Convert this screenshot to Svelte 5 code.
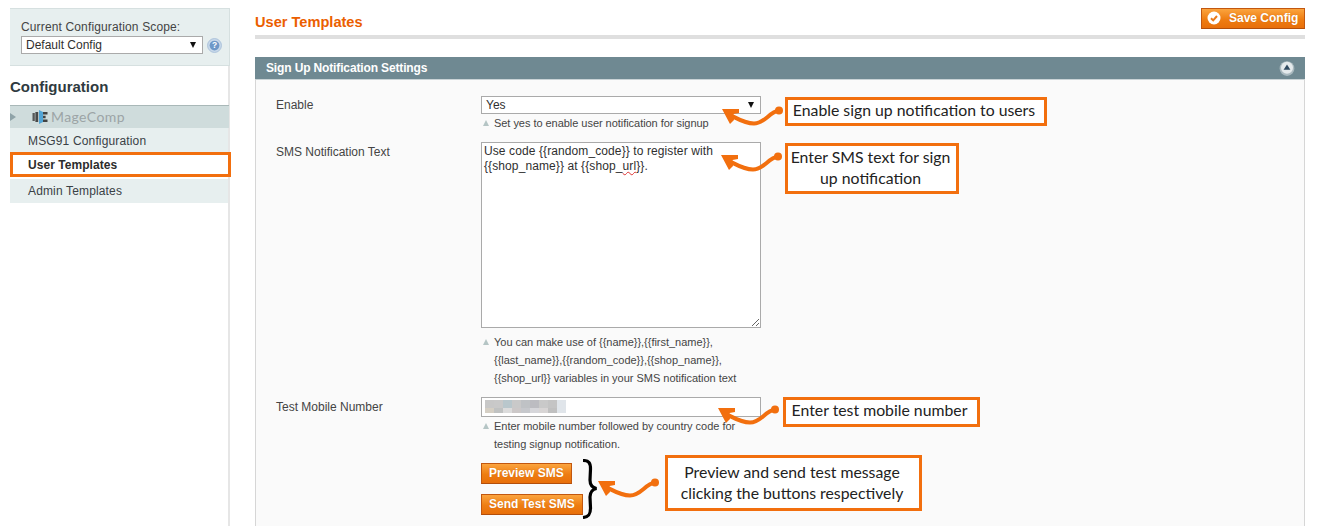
<script>
  const blur = [
    ['#c8c8c8','#c9c9c9','#b9c7cc','#c9c9c9','#bfc2c5','#bcbcc1','#c9c9c9','#c4c4c4','#e0e5ea'],
    ['#d5cfc4','#c0c2c2','#dcdcdc','#ccc8c8','#c6c8cc','#d6d6da','#d8d5d5','#c0c0c0','#e0e5ea']
  ];
</script>

<div class="page">
  <aside class="side">
    <div class="scope">
      <div class="scope-label">Current Configuration Scope:</div>
      <div class="scope-row">
        <div class="select scope-select"><span>Default Config</span><i class="caret"></i></div>
        <svg class="help" viewBox="0 0 16 16" width="15" height="15" aria-hidden="true">
          <circle cx="8" cy="8" r="7.4" fill="#c9d9ea" stroke="#a9c0da"/>
          <circle cx="8" cy="8" r="5.2" fill="#6f98c8"/>
          <text x="8" y="11" text-anchor="middle" class="help-q">?</text>
        </svg>
      </div>
    </div>
    <h3 class="conf">Configuration</h3>
    <div class="group">
      <i class="tri"></i>
      <svg class="logo" viewBox="0 0 16 14" width="16" height="14" aria-hidden="true">
        <rect x="0.5" y="3" width="2.3" height="8" fill="#4a4a4a"/>
        <rect x="3.4" y="2" width="2.8" height="10" fill="#3a3a3a"/>
        <path d="M7 0 L11 2 V12 L7 14Z" fill="#45a0d6"/>
        <path d="M11 2h4.5v2.6H11zM11 5.8h2.6v2.4H11zM11 9.4h4.5V12H11z" fill="#333"/>
      </svg>
      <span class="logo-text">MageComp</span>
    </div>
    <ul class="menu">
      <li class="item first">MSG91 Configuration</li>
      <li class="item active">User Templates</li>
      <li class="item last">Admin Templates</li>
    </ul>
  </aside>

  <main class="main">
    <header class="head">
      <h3 class="title">User Templates</h3>
      <button class="btn save">
        <svg viewBox="0 0 14 14" width="14" height="14" aria-hidden="true">
          <circle cx="7" cy="7" r="6.5" fill="#fff"/>
          <path d="M4 7.2l2.2 2.2L10 5" fill="none" stroke="#e97a1a" stroke-width="2"/>
        </svg>
        Save Config
      </button>
    </header>

    <section class="section">
      <div class="bar">
        <span>Sign Up Notification Settings</span>
        <svg viewBox="0 0 16 16" width="16" height="16" aria-hidden="true">
          <circle cx="8" cy="8.6" r="7.4" fill="#a9b9bf"/>
          <circle cx="8" cy="7.8" r="6" fill="#e4eaec"/>
          <path d="M8 4.4l3.4 5.4H4.6z" fill="#2f4a60"/>
        </svg>
      </div>
      <div class="body">
        <div class="row r1">
          <div class="lab">Enable</div>
          <div class="val">
            <div class="select"><span>Yes</span><i class="caret"></i></div>
            <p class="hint h1">Set yes to enable user notification for signup</p>
          </div>
        </div>
        <div class="row r2">
          <div class="lab">SMS Notification Text</div>
          <div class="val">
            <div class="area">Use code {'{{'}random_code{'}}'} to register with<br />{'{{'}shop_name{'}}'} at {'{{'}shop_<span class="typo">url</span>{'}}'}.</div>
            <p class="hint h2">You can make use of {'{{'}name{'}}'},{'{{'}first_name{'}}'},<br />{'{{'}last_name{'}}'},{'{{'}random_code{'}}'},{'{{'}shop_name{'}}'},<br />{'{{'}shop_url{'}}'} variables in your SMS notification text</p>
          </div>
        </div>
        <div class="row r3">
          <div class="lab">Test Mobile Number</div>
          <div class="val">
            <div class="input">
              <div class="blur">
                {#each blur as line, i}
                  <div class="blur-row" class:low={i === 1}>
                    {#each line as c}<b style="background:{c}"></b>{/each}
                  </div>
                {/each}
              </div>
            </div>
            <p class="hint h3">Enter mobile number followed by country code for<br />testing signup notification.</p>
            <div class="btns">
              <button class="btn">Preview SMS</button>
              <button class="btn">Send Test SMS</button>
            </div>
          </div>
        </div>
      </div>
    </section>
  </main>

  <!-- Annotation layer drawn over the screenshot -->
  <div class="ring"></div>

  <div class="note n1">Enable sign up notification to users</div>
  <div class="note n2">Enter SMS text for sign<br />up notification</div>
  <div class="note n3">Enter test mobile number</div>
  <div class="note n4">Preview and send test message<br />clicking the buttons respectively</div>

  <svg class="arrow a1" viewBox="0 0 66 20" width="66" height="20" aria-hidden="true"><use href="#arr" /></svg>
  <svg class="arrow a2" viewBox="0 0 66 20" width="66" height="20" aria-hidden="true"><use href="#arr" /></svg>
  <svg class="arrow a3" viewBox="0 0 66 20" width="66" height="20" aria-hidden="true"><use href="#arr" /></svg>
  <svg class="arrow a4" viewBox="0 0 66 20" width="66" height="20" aria-hidden="true"><use href="#arr" /></svg>

  <svg class="defs" width="0" height="0" aria-hidden="true">
    <defs>
      <g id="arr">
        <path d="M10 7 C18 11 25 15.5 34 15.5 C45 15.5 49 4 59 2.6" fill="none" stroke="#f26f0e" stroke-width="4" stroke-linecap="round"/>
        <circle cx="59" cy="2.6" r="4" fill="#f26f0e"/>
        <path d="M2 1 L19 1 L19 5 L13.5 6 L14 12 L10 16Z" fill="#f26f0e"/>
      </g>
    </defs>
  </svg>

  <svg class="brace" viewBox="0 0 20 60" width="20" height="60" aria-hidden="true">
    <path d="M2 1.5 C8 1.5 9.5 4 9.5 10 L9 21 C9 26 11 28.5 15.5 29.5 C11 30.5 9 33 9 38 L9.5 49 C9.5 55 8 58 2 58.5" fill="none" stroke="#000" stroke-width="3.2"/>
  </svg>
</div>

<style>
  :global(body) {
    margin: 0;
    background: #fff;
  }
  .page {
    position: relative;
    width: 1318px;
    height: 526px;
    overflow: hidden;
    display: flex;
    align-items: flex-start;
    padding-left: 10px;
    box-sizing: border-box;
    font: 12px/15px "Liberation Sans", Arial, sans-serif;
    color: #444;
  }

  .side {
    width: 220px;
    height: 518px;
    margin-top: 8px;
    flex: none;
    box-sizing: border-box;
    border-right: 2px solid #e6e6e6;
  }
  .scope {
    background: #e7efef;
    border: 1px solid #d6e0e0;
    border-left: 0;
    margin-right: -2px;
    height: 58px;
    box-sizing: border-box;
    padding: 11px 0 0 11px;
  }
  .scope-label { line-height: 15px; letter-spacing: 0.14px; }
  .scope-row {
    display: flex;
    align-items: center;
    gap: 4px;
    margin-top: 1px;
  }
  .select {
    height: 16px;
    border: 1px solid #aaa;
    background: #fff;
    box-sizing: content-box;
    display: flex;
    align-items: center;
    justify-content: space-between;
    padding: 0 6px 0 4px;
    color: #2f2f2f;
    line-height: 15px;
    width: 268px;
  }
  .scope-select {
    width: 170px;
  }
  .caret {
    width: 0;
    height: 0;
    border-left: 3.5px solid transparent;
    border-right: 3.5px solid transparent;
    border-top: 6px solid #111;
  }
  .help-q {
    font: bold 9px "Liberation Sans", sans-serif;
    fill: #fff;
  }
  .conf {
    margin: 12px 0 0;
    font-size: 15px;
    line-height: 18px;
    font-weight: bold;
    color: #2f3a40;
  }
  .group {
    position: relative;
    margin-top: 9px;
    height: 22px;
    background: #cfdcdc;
    border-top: 1px solid #a9b8b8;
    display: flex;
    align-items: center;
    padding-left: 22px;
    gap: 2px;
    margin-right: -1px;
  }
  .tri {
    position: absolute;
    left: 0;
    top: 7px;
    width: 0;
    height: 0;
    border-top: 4px solid transparent;
    border-bottom: 4px solid transparent;
    border-left: 6px solid #8fa3a8;
  }
  .logo { opacity: 0.9; }
  .logo-text {
    font: 14px/16px "Lato", sans-serif;
    letter-spacing: 0.4px;
    color: #9ca4a6;
    margin-left: 1px;
  }
  .menu {
    list-style: none;
    margin: 0;
    padding: 0;
    background: #e7efef;
  }
  .item {
    height: 24px;
    line-height: 27px;
    padding-left: 18px;
    color: #3a4146;
    white-space: nowrap;
    letter-spacing: 0.15px;
  }
  .active {
    height: 27px;
    line-height: 27px;
    background: #fff;
    color: #2c2c2c;
    font-weight: bold;
    letter-spacing: 0.05px;
  }
  .last { height: 24px; line-height: 25px; }

  .main {
    width: 1050px;
    margin-left: 25px;
    flex: none;
  }
  .head {
    height: 27px;
    padding-top: 8px;
    border-bottom: 4px solid #dfdfdf;
    display: flex;
    justify-content: space-between;
    align-items: flex-start;
  }
  .title {
    margin: 5px 0 0;
    font-size: 14.6px;
    line-height: 18px;
    font-weight: bold;
    color: #eb5e00;
  }
  .btn {
    height: 21px;
    box-sizing: border-box;
    padding: 0 7px 2px;
    border: 1px solid #c2570f;
    border-bottom-color: #b34e0a;
    background: linear-gradient(#fba43e, #ee7d12 55%, #e86f0a);
    color: #fff;
    font: bold 12px/18px "Liberation Sans", Arial, sans-serif;
    text-shadow: 0 0 1px #c96a10;
    display: inline-flex;
    align-items: center;
    white-space: nowrap;
    cursor: pointer;
  }
  .save {
    width: 104px;
    gap: 8px;
    padding: 0 0 2px 5px;
  }
  .section {
    margin-top: 18px;
  }
  .bar {
    height: 22px;
    background: #6f8992;
    color: #fff;
    font-weight: bold;
    letter-spacing: -0.14px;
    display: flex;
    align-items: center;
    justify-content: space-between;
    padding: 0 10px 0 11px;
    box-sizing: border-box;
  }
  .body {
    height: 480px;
    box-sizing: border-box;
    border: 1px solid #d6d6d6;
    border-top-color: #c9d3d6;
    background: #fafafa;
    padding: 16px 0 0 20px;
  }
  .row {
    display: flex;
    align-items: flex-start;
  }
  .lab {
    width: 205px;
    flex: none;
    padding-top: 3px;
    color: #444;
  }
  .r1 .lab { padding-top: 2px; }
  .val { width: 280px; flex: none; }
  .r2 { margin-top: 10px; }
  .r3 { margin-top: 10px; }
  .hint {
    position: relative;
    margin: 0;
    padding: 0 0 0 13px;
    font-size: 11px;
    line-height: 18px;
    color: #444;
    white-space: nowrap;
    letter-spacing: -0.02px;
  }
  .hint::before {
    content: "";
    position: absolute;
    left: 2px;
    top: 6px;
    width: 0;
    height: 0;
    border-left: 3.5px solid transparent;
    border-right: 3.5px solid transparent;
    border-bottom: 6px solid #b5c5c5;
  }
  .h1 { letter-spacing: -0.04px; }
  .h2 { padding-top: 5px; }
  .h2::before { top: 11px; }
  .area {
    height: 186px;
    box-sizing: border-box;
    border: 1px solid #aaa;
    background: #fff;
    padding: 1px 2px;
    color: #2f2f2f;
    line-height: 15px;
    letter-spacing: 0.1px;
    resize: vertical;
    overflow: auto;
  }
  .typo {
    text-decoration: underline wavy #d33;
    text-decoration-thickness: 1px;
  }
  .input {
    height: 20px;
    box-sizing: border-box;
    border: 1px solid #aaa;
    background: #fff;
    padding: 2px 3px;
  }
  .blur { width: 81px; }
  .blur-row { display: flex; height: 8px; }
  .blur-row.low { height: 5px; }
  .blur-row b {
    display: block;
    flex: 1;
  }
  .btns {
    display: flex;
    flex-direction: column;
    align-items: flex-start;
    gap: 10px;
    margin-top: 10px;
  }

  /* annotation overlays */
  .ring {
    position: absolute;
    left: 10px;
    top: 152px;
    width: 221px;
    height: 25px;
    box-sizing: border-box;
    border: 3px solid #f26f0e;
    pointer-events: none;
  }
  .note {
    position: absolute;
    box-sizing: border-box;
    border: 3px solid #f26f0e;
    background: #fff;
    color: #222;
    font: 15.8px/21px "Lato", "Open Sans", sans-serif;
    text-align: center;
    white-space: nowrap;
  }
  .n1 { left: 785px; top: 97px; width: 262px; height: 29px; line-height: 20px; padding-right: 4px; }
  .n2 { left: 785px; top: 143px; width: 174px; height: 51px; padding-right: 3px; }
  .n3 { left: 783px; top: 397px; width: 197px; height: 30px; line-height: 20px; padding-right: 4px; }
  .n4 { left: 665px; top: 455px; width: 257px; height: 56px; padding: 3px 3px 0 0; }
  .arrow { position: absolute; overflow: visible; }
  .a1 { left: 720px; top: 108px; }
  .a2 { left: 719px; top: 154px; }
  .a3 { left: 716px; top: 407px; }
  .a4 { left: 596px; top: 480px; }
  .defs { position: absolute; }
  .brace { position: absolute; left: 581px; top: 459px; }
</style>
